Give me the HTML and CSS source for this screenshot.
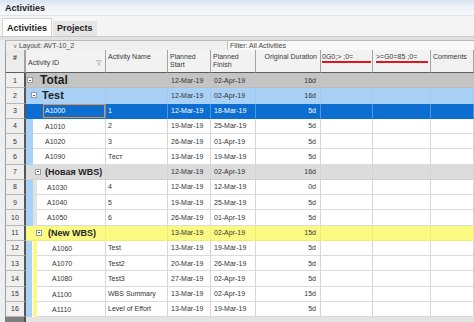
FILE: index.html
```html
<!DOCTYPE html>
<html lang="en">
<head>
    <meta charset="UTF-8">
    <title>Activities</title>
    <link rel="stylesheet" href="styles.css">
</head>
<body>
    <div class="title">Activities</div>
    <div class="tabs">
        <span class="tab active">Activities</span>
        <span class="tab">Projects</span>
    </div>
    <div class="strip"></div>

    <div class="panel">
        <div class="layoutbar">
            <span class="layout"><span class="chev">&#8744;</span> Layout: AVT-10_2</span>
            <span class="filter">Filter: All Activities</span>
        </div>

        <div class="row hd">
            <div class="n">#</div>
            <div class="id">Activity ID
                <svg class="funnel" width="6" height="6" viewBox="0 0 6 6"><path d="M0.5 0.5h5L3.6 3v2.5L2.4 4.8V3z" fill="none" stroke="#b0b0b0" stroke-width="0.8"/></svg>
            </div>
            <div>Activity Name</div>
            <div>Planned<br>Start</div>
            <div>Planned<br>Finish</div>
            <div class="dur">Original Duration</div>
            <div><span class="mark m1">0G0;&gt; ;0=</span></div>
            <div><span class="mark m2">&gt;=G0=85 ;0=</span></div>
            <div>Comments</div>
        </div>

        <div class="row g0">
            <div class="n">1</div>
            <div class="id"><span class="tog"></span><b>Total</b></div>
            <div></div><div>12-Mar-19</div><div>02-Apr-19</div><div class="dur">16d</div><div></div><div></div><div></div>
        </div>
        <div class="row g1">
            <div class="n">2</div>
            <div class="id"><span class="tog"></span><b>Test</b></div>
            <div></div><div>12-Mar-19</div><div>02-Apr-19</div><div class="dur">16d</div><div></div><div></div><div></div>
        </div>
        <div class="row sel">
            <div class="n">3</div>
            <div class="id"><span class="focus">A1000</span></div>
            <div>1</div><div>12-Mar-19</div><div>18-Mar-19</div><div class="dur">5d</div><div></div><div></div><div></div>
        </div>
        <div class="row l1">
            <div class="n">4</div>
            <div class="id">A1010</div>
            <div>2</div><div>19-Mar-19</div><div>25-Mar-19</div><div class="dur">5d</div><div></div><div></div><div></div>
        </div>
        <div class="row l1">
            <div class="n">5</div>
            <div class="id">A1020</div>
            <div>3</div><div>26-Mar-19</div><div>01-Apr-19</div><div class="dur">5d</div><div></div><div></div><div></div>
        </div>
        <div class="row l1">
            <div class="n">6</div>
            <div class="id">A1090</div>
            <div>Тест</div><div>13-Mar-19</div><div>19-Mar-19</div><div class="dur">5d</div><div></div><div></div><div></div>
        </div>
        <div class="row g2">
            <div class="n">7</div>
            <div class="id"><span class="tog"></span><b>(Новая WBS)</b></div>
            <div></div><div>12-Mar-19</div><div>02-Apr-19</div><div class="dur">16d</div><div></div><div></div><div></div>
        </div>
        <div class="row l2">
            <div class="n">8</div>
            <div class="id">A1030</div>
            <div>4</div><div>12-Mar-19</div><div>12-Mar-19</div><div class="dur">0d</div><div></div><div></div><div></div>
        </div>
        <div class="row l2">
            <div class="n">9</div>
            <div class="id">A1040</div>
            <div>5</div><div>19-Mar-19</div><div>25-Mar-19</div><div class="dur">5d</div><div></div><div></div><div></div>
        </div>
        <div class="row l2">
            <div class="n">10</div>
            <div class="id">A1050</div>
            <div>6</div><div>26-Mar-19</div><div>01-Apr-19</div><div class="dur">5d</div><div></div><div></div><div></div>
        </div>
        <div class="row g3">
            <div class="n">11</div>
            <div class="id"><span class="tog"></span><b>(New WBS)</b></div>
            <div></div><div>13-Mar-19</div><div>02-Apr-19</div><div class="dur">15d</div><div></div><div></div><div></div>
        </div>
        <div class="row l3">
            <div class="n">12</div>
            <div class="id">A1060</div>
            <div>Test</div><div>13-Mar-19</div><div>19-Mar-19</div><div class="dur">5d</div><div></div><div></div><div></div>
        </div>
        <div class="row l3">
            <div class="n">13</div>
            <div class="id">A1070</div>
            <div>Test2</div><div>20-Mar-19</div><div>26-Mar-19</div><div class="dur">5d</div><div></div><div></div><div></div>
        </div>
        <div class="row l3">
            <div class="n">14</div>
            <div class="id">A1080</div>
            <div>Test3</div><div>27-Mar-19</div><div>02-Apr-19</div><div class="dur">5d</div><div></div><div></div><div></div>
        </div>
        <div class="row l3">
            <div class="n">15</div>
            <div class="id">A1100</div>
            <div>WBS Summary</div><div>13-Mar-19</div><div>02-Apr-19</div><div class="dur">15d</div><div></div><div></div><div></div>
        </div>
        <div class="row l3">
            <div class="n">16</div>
            <div class="id">A1110</div>
            <div>Level of Effort</div><div>13-Mar-19</div><div>19-Mar-19</div><div class="dur">5d</div><div></div><div></div><div></div>
        </div>
        <div class="foot"><div class="n"></div><div></div></div>
    </div>
</body>
</html>
```

FILE: styles.css
```css
* { box-sizing: border-box }
body {
    margin: 0;
    height: 322px;
    overflow: hidden;
    background: #eceff2;
    font-family: "Liberation Sans", Arial, sans-serif;
    color: #333;
}

.title {
    height: 16px;
    padding: 3px 0 0 5px;
    font-size: 9px;
    font-weight: bold;
    color: #1c1c1c;
    background: linear-gradient(#d6e3f1, #eef3f8 45%, #f6f8fb);
    border-bottom: 1px solid #dfe4ea;
}
.tabs {
    height: 20px;
    display: flex;
    align-items: flex-end;
    padding-left: 2px;
    background: #f5f5f5;
}
.tab { font-size: 9px; font-weight: bold; color: #1c1c1c; padding: 0 4px; line-height: 14px; }
.tab.active { background: #fff; height: 18px; padding-top: 2px; border: 1px solid #d4d4d4; border-bottom: none; }
.tab:not(.active) { background: #e6e6e6; height: 15px; margin-left: 1px; }
.strip { height: 4px; background: #e1e1e1; border-top: 1px solid #cacaca; }

.panel { margin-left: 5px; background: #fff; }
.layoutbar {
    display: flex;
    height: 10px;
    font-size: 7px;
    line-height: 9px;
    color: #444;
    background: #efefef;
    border-top: 1px solid #b9b9b9;
    border-left: 1px solid #a8a8a8;
}
.layout { width: 221px; padding-left: 7px; }
.chev { color: #777; font-size: 6px; }
.filter { flex: 1; padding-left: 2px; background: #f9f9f9; border-left: 1px solid #c2c2c2; }

.row {
    display: grid;
    grid-template-columns: 21px 80px 62px 43px 45px 65px 52px 58px 43px;
    height: 15.25px;
    font-size: 7px;
}
.row > div {
    display: flex;
    align-items: center;
    padding: 0 3px;
    white-space: nowrap;
    overflow: hidden;
    border-right: 1px solid #d7d7d7;
    border-bottom: 1px solid #dbdbdb;
}
.row > .n {
    justify-content: center;
    padding: 0;
    background: #efefef;
    border-left: 1px solid #9d9d9d;
    border-right: 2px solid #565656;
    border-bottom-color: #b7b7b7;
}
.row > .dur { justify-content: flex-end; padding-right: 4px; }
.row > div:nth-child(3) { padding-left: 2px; }

/* header */
.row.hd { height: 23px; }
.row.hd > div {
    display: block;
    padding: 3px 2px 0;
    line-height: 8px;
    background: #f2f2f2;
    border-right-color: #a3a3a3;
    border-bottom: 1px solid #5e5e5e;
    color: #3a3a3a;
}
.row.hd > .n { text-align: center; font-weight: bold; padding-top: 4px; background: #ececec; }
.row.hd > .id { display: flex; justify-content: space-between; }
.row.hd > .dur { text-align: right; padding-right: 3px; }
.funnel { align-self: flex-end; margin: 0 1px 6px 0; }
.mark { display: block; border-bottom: 2px solid #e3151c; }
.m1 { width: 49px; margin-left: -1px; }
.m2 { width: 52px; margin-left: 1px; }

/* toggle box of a group */
.tog {
    width: 6px;
    height: 6px;
    flex: none;
    border: 1px solid #9a9a9a;
    background: linear-gradient(#555, #555) center / 2px 1px no-repeat, #fbfbfb;
}
.row b { color: #1f1f1f; }

/* Total */
.g0 > div:not(.n) { background: #c4c4c4; border-right-color: #c4c4c4; border-bottom-color: #bcbcbc; }
.g0 > .id { padding-left: 1px; }
.g0 .tog { margin-right: 7px; }
.g0 b { font-size: 12px; }

/* Test */
.g1 > div:not(.n) { background: #a9d0f5; border-right-color: #a2caf0; border-bottom-color: #a9d0f5; }
.g1 > .id { padding-left: 5px; }
.g1 .tog { margin-right: 5px; }
.g1 b { font-size: 11px; }

/* selected row */
.sel > div:not(.n) { background: #0c6ed1; color: #fff; border-right-color: #4c97e3; border-bottom-color: #0c6ed1; }
.sel > .id {
    padding: 0 0 0 17px;
    background: linear-gradient(90deg, #0c6ed1 2px, #6ca9ec 2px 4px, #0c6ed1 4px);
}
.focus {
    flex: 1;
    align-self: stretch;
    display: flex;
    align-items: center;
    padding-left: 1px;
    border: 1px solid #ef8d3a;
}

.l1 > .id {
    padding-left: 19px;
    border-bottom: 0;
    background: linear-gradient(#dbdbdb, #dbdbdb) 7px 100% / 100% 1px no-repeat,
                linear-gradient(90deg, #a9d0f5 7px, #fff 7px);
}

/* Новая WBS */
.g2 > div:not(.n) { background: #dcdcdc; border-right-color: #d4d4d4; border-bottom-color: #d2d2d2; }
.g2 > .id { padding-left: 9px; background: linear-gradient(90deg, #a9d0f5 7px, #dcdcdc 7px); }
.g2 .tog { margin-right: 4px; }
.g2 b { font-size: 9px; }
.l2 > .id {
    padding-left: 21px;
    border-bottom: 0;
    background: linear-gradient(#dbdbdb, #dbdbdb) 11px 100% / 100% 1px no-repeat,
                linear-gradient(90deg, #a9d0f5 7px, #e2e2e2 7px 11px, #fff 11px);
}

/* New WBS */
.g3 > div:not(.n) { background: #fbfb84; border-right-color: #efef80; border-bottom-color: #ecec7a; }
.g3 > .id { padding-left: 10px; background: linear-gradient(90deg, #a9d0f5 7px, #fbfb84 7px); }
.g3 .tog { margin-right: 6px; }
.g3 b { font-size: 9px; }
.l3 > .id {
    padding-left: 26px;
    border-bottom: 0;
    background: linear-gradient(#dbdbdb, #dbdbdb) 11px 100% / 100% 1px no-repeat,
                linear-gradient(90deg, #a9d0f5 6px, #fff 6px 7px, #fbfb84 7px 11px, #fff 11px);
}

.foot { display: flex; height: 6px; background: #e3e3e3; }
.foot .n { width: 21px; background: #7e7e7e; border-right: 2px solid #4e4e4e; }
```
